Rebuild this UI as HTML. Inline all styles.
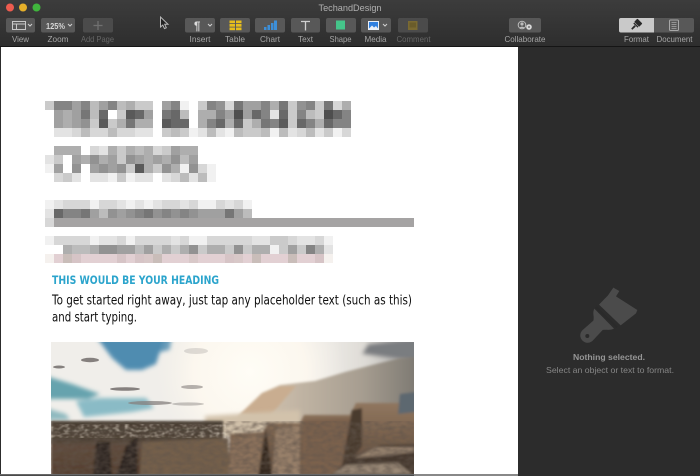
<!DOCTYPE html>
<html><head><meta charset="utf-8"><title>TechandDesign</title>
<style>
html,body{margin:0;padding:0;background:#2b2b2b}
#w{position:relative;width:700px;height:476px;overflow:hidden;background:#2c2c2c;font-family:"Liberation Sans",sans-serif}
#tb{position:absolute;left:0;top:0;width:700px;height:46px;background:linear-gradient(#3c3c3c,#2e2e2e);border-bottom:1px solid #151515}
#pg{position:absolute;left:1px;top:47px;width:517px;height:429px;background:#fff}
#bar{position:absolute;left:54px;top:218px;width:360px;height:9px;background:#a5a3a3}
table{position:absolute;border-collapse:collapse;table-layout:fixed}
td{width:9px;height:9px;padding:0;border:0;font-size:0;line-height:0}
.w{background:#fff}.a{background:#f1f1f1}.b{background:#e3e3e3}.c{background:#d7d7d7}.d{background:#cacaca}.e{background:#bcbcbc}.f{background:#aeaeae}.g{background:#a0a0a0}.h{background:#929292}.i{background:#848484}.j{background:#767676}.k{background:#686868}.l{background:#5a5a5a}.m{background:#4e4e4e}
.p{background:#e2d0d3}.q{background:#d8c8c8}.r{background:#c9bdb9}.s{background:#f5f1ee}.t{background:#d6c4c6}
svg{position:absolute;left:0;top:0}
</style></head><body><div id="w">
<div id="tb"></div><div id="pg"></div>
<table style="left:45px;top:101px">
<tr><td class=d><td class=i><td class=i><td class=g><td class=i><td class=e><td class=g><td class=i><td class=e><td class=f><td class=d><td class=d><td class=w><td class=g><td class=i><td class=a><td class=w><td class=d><td class=i><td class=h><td class=c><td class=j><td class=g><td class=g><td class=i><td class=f><td class=j><td class=d><td class=h><td class=i><td class=d><td class=j><td class=c><td class=f>
<tr><td class=w><td class=g><td class=f><td class=g><td class=j><td class=e><td class=k><td class=w><td class=d><td class=l><td class=k><td class=g><td class=w><td class=j><td class=k><td class=e><td class=w><td class=f><td class=f><td class=i><td class=g><td class=m><td class=g><td class=k><td class=i><td class=b><td class=k><td class=d><td class=i><td class=e><td class=d><td class=m><td class=k><td class=i>
<tr><td class=w><td class=g><td class=f><td class=g><td class=h><td class=d><td class=l><td class=d><td class=f><td class=j><td class=f><td class=f><td class=w><td class=l><td class=k><td class=k><td class=w><td class=f><td class=i><td class=k><td class=f><td class=k><td class=d><td class=f><td class=j><td class=i><td class=l><td class=d><td class=k><td class=i><td class=f><td class=k><td class=i><td class=i>
<tr><td class=w><td class=b><td class=b><td class=c><td class=e><td class=c><td class=c><td class=e><td class=c><td class=c><td class=b><td class=b><td class=w><td class=d><td class=e><td class=d><td class=a><td class=b><td class=e><td class=b><td class=a><td class=e><td class=d><td class=d><td class=e><td class=a><td class=e><td class=b><td class=c><td class=e><td class=b><td class=d><td class=a><td class=c>
</table>
<table style="left:45px;top:146px">
<tr><td class=w><td class=f><td class=f><td class=f><td class=w><td class=c><td class=b><td class=f><td class=d><td class=f><td class=e><td class=f><td class=c><td class=d><td class=g><td class=f><td class=f><td class=w><td class=w>
<tr><td class=b><td class=d><td class=w><td class=g><td class=f><td class=h><td class=f><td class=g><td class=d><td class=h><td class=g><td class=f><td class=g><td class=f><td class=h><td class=e><td class=g><td class=w><td class=w>
<tr><td class=a><td class=g><td class=w><td class=h><td class=w><td class=g><td class=h><td class=g><td class=h><td class=d><td class=l><td class=f><td class=d><td class=h><td class=f><td class=a><td class=h><td class=c><td class=a>
<tr><td class=w><td class=c><td class=d><td class=b><td class=w><td class=b><td class=b><td class=a><td class=d><td class=a><td class=b><td class=b><td class=w><td class=b><td class=c><td class=e><td class=b><td class=e><td class=a>
</table>
<table style="left:45px;top:200px">
<tr><td class=a><td class=b><td class=c><td class=c><td class=c><td class=a><td class=c><td class=c><td class=b><td class=a><td class=b><td class=a><td class=b><td class=c><td class=c><td class=b><td class=c><td class=a><td class=a><td class=c><td class=b><td class=c><td class=a>
<tr><td class=b><td class=k><td class=i><td class=i><td class=j><td class=g><td class=e><td class=h><td class=g><td class=h><td class=i><td class=j><td class=h><td class=i><td class=h><td class=i><td class=h><td class=g><td class=g><td class=g><td class=j><td class=g><td class=e>
<tr><td class=c>
</table>
<div id="bar"></div>
<table style="left:45px;top:236px">
<tr><td class=a><td class=c><td class=c><td class=c><td class=c><td class=a><td class=b><td class=b><td class=c><td class=a><td class=c><td class=c><td class=c><td class=c><td class=b><td class=c><td class=a><td class=a><td class=c><td class=c><td class=c><td class=c><td class=c><td class=b><td class=b><td class=d><td class=d><td class=c><td class=b><td class=b><td class=c><td class=a>
<tr><td class=w><td class=w><td class=f><td class=e><td class=e><td class=f><td class=h><td class=h><td class=g><td class=g><td class=e><td class=g><td class=d><td class=f><td class=d><td class=f><td class=h><td class=d><td class=f><td class=f><td class=d><td class=h><td class=d><td class=f><td class=f><td class=a><td class=d><td class=g><td class=d><td class=i><td class=f><td class=b>
<tr><td class=s><td class=p><td class=r><td class=t><td class=p><td class=p><td class=p><td class=p><td class=t><td class=p><td class=t><td class=q><td class=r><td class=p><td class=p><td class=p><td class=q><td class=p><td class=p><td class=p><td class=t><td class=q><td class=p><td class=r><td class=p><td class=p><td class=p><td class=r><td class=p><td class=p><td class=t><td class=s>
</table>
<svg width="700" height="476" viewBox="0 0 700 476" xmlns="http://www.w3.org/2000/svg" font-family="Liberation Sans, sans-serif">
<defs>
<clipPath id="ci"><rect x="51" y="342" width="363" height="132"/></clipPath>
<filter id="b3" x="-20%" y="-20%" width="140%" height="140%"><feGaussianBlur stdDeviation="2"/></filter>
<filter id="b1" x="-20%" y="-20%" width="140%" height="140%"><feGaussianBlur stdDeviation="1.200"/></filter>
<filter id="s" x="0" y="0" width="100%" height="100%"><feGaussianBlur stdDeviation=".3"/></filter>
<filter id="tx" x="0" y="0" width="100%" height="100%"><feTurbulence type="fractalNoise" baseFrequency=".14 .26" numOctaves="2" seed="4"/><feColorMatrix values="0 0 0 0 .12  0 0 0 0 .09  0 0 0 0 .07  1.700 0 0 0 -.5"/><feGaussianBlur stdDeviation=".6"/></filter>
<filter id="tl" x="0" y="0" width="100%" height="100%"><feTurbulence type="fractalNoise" baseFrequency=".2 .4" numOctaves="2" seed="9"/><feColorMatrix values="0 0 0 0 .85  0 0 0 0 .77  0 0 0 0 .66  2.200 0 0 0 -1"/><feGaussianBlur stdDeviation=".5"/></filter>
<radialGradient id="sun" gradientUnits="userSpaceOnUse" cx="250" cy="372" r="95"><stop offset="0" stop-color="#fffdf6"/><stop offset=".6" stop-color="#fdf8ef" stop-opacity=".9"/><stop offset="1" stop-color="#f6f2ea" stop-opacity="0"/></radialGradient>
<linearGradient id="mt" x1="0" x2="1" y1="0" y2="0"><stop offset="0" stop-color="#d8c6ae"/><stop offset=".3" stop-color="#c4b7a6"/><stop offset=".7" stop-color="#a69d90"/><stop offset="1" stop-color="#7e7a73"/></linearGradient>
<linearGradient id="gr" x1="0" x2="0" y1="0" y2="1"><stop offset="0" stop-color="#463c31"/><stop offset=".35" stop-color="#4f4337"/><stop offset=".45" stop-color="#5f4b3c"/><stop offset="1" stop-color="#553f30"/></linearGradient>
<linearGradient id="cl" x1="0" x2="0" y1="0" y2="1"><stop offset="0" stop-color="#937961"/><stop offset="1" stop-color="#5f4a3a"/></linearGradient>
<linearGradient id="tr" x1="0" x2="1" y1="0" y2="0"><stop offset="0" stop-color="#e7e3dc" stop-opacity="0"/><stop offset=".55" stop-color="#d5d2cc" stop-opacity=".7"/><stop offset="1" stop-color="#8b8b8c"/></linearGradient>
<linearGradient id="bot" x1="0" x2="0" y1="0" y2="1"><stop offset="0" stop-color="#777"/><stop offset="1" stop-color="#3c3c3c"/></linearGradient>
</defs>

<!-- photo -->
<g clip-path="url(#ci)">
<rect x="51" y="342" width="363" height="132" fill="#f0eeea"/>
<g filter="url(#b3)">
<polygon points="97,338 172,338 170,350 160,352 156,364 142,370 126,370 112,358" fill="#4f8cb0"/>
<polygon points="46,376 72,384 100,394 88,399 46,399" fill="#66a3ae"/>
<polygon points="76,401 100,398 146,398 154,408 132,412 84,417" fill="#8abbc6"/>
<polygon points="46,408 66,414 70,420 46,420" fill="#8fb9bf"/>
<rect x="300" y="338" width="120" height="50" fill="url(#tr)"/>
<polygon points="368,344 420,338 420,362 392,358 362,354" fill="#7a7d80"/>
</g>
<rect x="130" y="320" width="240" height="105" fill="url(#sun)"/>
<g filter="url(#s)" fill="#85807e">
<ellipse cx="90" cy="360" rx="9" ry="2.200"/><ellipse cx="59" cy="367" rx="6" ry="1.500"/><ellipse cx="125" cy="389" rx="15" ry="1.800"/><ellipse cx="192" cy="387" rx="11" ry="2" opacity=".6"/><ellipse cx="150" cy="403" rx="22" ry="2" opacity=".75"/><ellipse cx="188" cy="404" rx="16" ry="1.600" opacity=".45"/><ellipse cx="196" cy="351" rx="12" ry="3" opacity=".25"/>
</g>
<g filter="url(#b1)">
<polygon points="238,416 262,393 280,385 315,381 345,372 372,365 400,358 416,357 416,425 238,425" fill="url(#mt)"/>
<polygon points="240,414 262,393 280,386 296,386 270,416" fill="#c9ad90"/>
</g>
<polygon points="205,416 300,410 300,436 205,438" fill="#d2c2ab" filter="url(#b3)"/>
<g filter="url(#b1)">
<rect x="51" y="421" width="172" height="55" fill="url(#gr)"/>
<polygon points="228,476 230,434 263,432 268,423 300,423 304,415 350,415 356,403 400,403 416,398 416,476" fill="url(#cl)"/>
<polygon points="93,476 96,442 110,442 112,476" fill="#2f2620"/>
<polygon points="116,476 126,446 138,436 137,476" fill="#2f2620"/>
<polygon points="140,476 142,442 228,438 230,476" fill="#75604c"/>
<polygon points="228,476 232,438 262,434 260,476" fill="#8c725c"/>
<polygon points="258,476 266,428 272,476" fill="#33271f"/>
<polygon points="272,476 276,428 300,426 300,476" fill="#98806a"/>
<polygon points="300,476 304,420 350,418 344,476" fill="#7b624e"/>
<polygon points="340,476 352,410 362,408 362,446 340,476" fill="#4a3a2e"/>
<polygon points="350,458 380,445 416,444 416,476 330,476" fill="#45372d"/>
<polygon points="354,458 376,447 414,447 414,452 380,456" fill="#96826e"/>
<polygon points="332,474 346,465 398,463 412,474" fill="#9a8977"/>
<polygon points="400,394 416,392 416,412 398,414" fill="#5d6770"/>
</g>
<rect x="51" y="421" width="363" height="53" filter="url(#tx)" opacity=".7"/>
<rect x="51" y="424" width="175" height="14" filter="url(#tl)" opacity=".75"/>
</g>
<rect x="0" y="474" width="414" height="2" fill="url(#bot)"/>
<rect x="414" y="474" width="104" height="2" fill="#888"/>

<!-- document text -->
<text x="52" y="284" font-size="11.500" font-weight="700" fill="#2ba4cc" textLength="167" lengthAdjust="spacingAndGlyphs" font-family="DejaVu Sans, sans-serif">THIS WOULD BE YOUR HEADING</text>
<text x="52" y="304.500" font-size="13" fill="#0e0e0e" textLength="360" lengthAdjust="spacingAndGlyphs" font-family="DejaVu Sans, sans-serif">To get started right away, just tap any placeholder text (such as this)</text>
<text x="52" y="321.500" font-size="13" fill="#0e0e0e" textLength="85" lengthAdjust="spacingAndGlyphs" font-family="DejaVu Sans, sans-serif">and start typing.</text>

<g filter="url(#s)">
<!-- window chrome -->
<circle cx="10" cy="7.500" r="4" fill="#ee5b50"/><circle cx="23" cy="7.500" r="4" fill="#e6b02c"/><circle cx="36.500" cy="7.500" r="4" fill="#3fb63c"/>
<text x="350" y="11" font-size="9.500" fill="#b0b0b0" text-anchor="middle" textLength="63" lengthAdjust="spacingAndGlyphs">TechandDesign</text>

<!-- toolbar buttons -->
<g fill="#585858">
<rect x="6" y="18" width="29" height="14.500" rx="2"/><rect x="41" y="18" width="34" height="14.500" rx="2"/><rect x="83" y="18" width="30" height="14.500" rx="2" fill="#4c4c4c"/>
<rect x="185" y="18" width="30" height="14.500" rx="2"/><rect x="220" y="18" width="30" height="14.500" rx="2"/><rect x="255" y="18" width="30" height="14.500" rx="2"/><rect x="291" y="18" width="29" height="14.500" rx="2"/><rect x="326" y="18" width="30" height="14.500" rx="2"/><rect x="361" y="18" width="30" height="14.500" rx="2"/><rect x="398" y="18" width="30" height="14.500" rx="2" fill="#4c4c4c"/>
<rect x="509" y="18" width="32" height="14.500" rx="2"/>
<rect x="619" y="18" width="75" height="14.500" rx="2"/>
</g>
<path d="M621 18H654V32.500H621a2 2 0 0 1-2-2V20a2 2 0 0 1 2-2z" fill="#c9c9c9"/>

<!-- icons -->
<g fill="none" stroke="#c8c8c8" stroke-width="1"><rect x="12.500" y="21.500" width="13" height="8"/><path d="M12.500 24H25.500M16.500 24V29.500"/></g>
<g fill="none" stroke="#d0d0d0" stroke-width="1"><path d="M28 24l2 2 2-2M68 24l2 2 2-2M208 24l2 2 2-2M383 24l2 2 2-2"/></g>
<text x="46" y="29" font-size="8.500" font-weight="700" fill="#d8d8d8" textLength="19" lengthAdjust="spacingAndGlyphs">125%</text>
<path d="M98 21V30M93.500 25.500H102.500" stroke="#6f6f6f" stroke-width="1.300"/>
<text x="194" y="30" font-size="11.500" font-weight="700" fill="#dcdcdc">¶</text>
<g fill="#e6bd1f"><rect x="229.500" y="20.500" width="5.500" height="2.700"/><rect x="236" y="20.500" width="5.500" height="2.700"/><rect x="229.500" y="24" width="5.500" height="2.700"/><rect x="236" y="24" width="5.500" height="2.700"/><rect x="229.500" y="27.500" width="5.500" height="2.700"/><rect x="236" y="27.500" width="5.500" height="2.700"/></g>
<g fill="#3d8fd8"><rect x="264" y="27" width="2.500" height="3"/><rect x="267.500" y="25" width="2.500" height="5"/><rect x="271" y="23" width="2.500" height="7"/><rect x="274" y="20.500" width="3" height="9.500"/></g>
<path d="M301 21.500H310M305.500 21.500V30.500" stroke="#d0d0d0" stroke-width="1.300" fill="none"/>
<rect x="336" y="20.500" width="9" height="9" fill="#45c58a"/>
<rect x="368" y="21" width="11" height="9" fill="#e9eef6"/><rect x="369" y="22" width="9" height="6.500" fill="#2f7fe0"/><path d="M369 28.500l3-3 2 2 2-1.500 2 2.500z" fill="#e9eef6"/>
<rect x="408" y="21" width="9.500" height="9" fill="#7a6a32"/><rect x="409.500" y="22.500" width="6.500" height="5" fill="#6a5c2c"/>
<circle cx="522" cy="25" r="3.800" fill="none" stroke="#bdbdbd" stroke-width="1"/><circle cx="522" cy="24" r="1.600" fill="#bdbdbd"/><path d="M519.500 28c.8-1.800 4.200-1.800 5 0" fill="#bdbdbd"/>
<circle cx="529" cy="27" r="2.800" fill="#d8d8d8"/><circle cx="529" cy="27" r=".9" fill="#555"/>
<g transform="translate(636 25) rotate(45)" fill="#2a2a2a"><rect x="-3.500" y="-5.500" width="7" height="4.500" rx=".6"/><rect x="-3" y="-.5" width="6" height="1.300"/><path d="M-1 1.200H1L.8 6H-.8z"/></g>
<rect x="669.500" y="20" width="9" height="10.500" rx="1" fill="none" stroke="#a8a8a8"/><path d="M671.500 22.500h5M671.500 24.500h5M671.500 26.500h5M671.500 28.500h5" stroke="#a8a8a8" stroke-width=".8"/>

<!-- toolbar labels -->
<g font-size="8.500" fill="#a6a6a6" text-anchor="middle">
<text x="20.500" y="42" textLength="17" lengthAdjust="spacingAndGlyphs">View</text>
<text x="58" y="42" textLength="21" lengthAdjust="spacingAndGlyphs">Zoom</text>
<text x="97.500" y="42" fill="#666" textLength="33" lengthAdjust="spacingAndGlyphs">Add Page</text>
<text x="200" y="42" textLength="21" lengthAdjust="spacingAndGlyphs">Insert</text>
<text x="235" y="42" textLength="20" lengthAdjust="spacingAndGlyphs">Table</text>
<text x="270" y="42" textLength="20" lengthAdjust="spacingAndGlyphs">Chart</text>
<text x="305.500" y="42" textLength="15" lengthAdjust="spacingAndGlyphs">Text</text>
<text x="340.500" y="42" textLength="22" lengthAdjust="spacingAndGlyphs">Shape</text>
<text x="375.500" y="42" textLength="22" lengthAdjust="spacingAndGlyphs">Media</text>
<text x="413.500" y="42" fill="#666" textLength="34" lengthAdjust="spacingAndGlyphs">Comment</text>
<text x="525" y="42" textLength="41" lengthAdjust="spacingAndGlyphs">Collaborate</text>
<text x="636.500" y="42" textLength="25" lengthAdjust="spacingAndGlyphs">Format</text>
<text x="674.500" y="42" textLength="36" lengthAdjust="spacingAndGlyphs">Document</text>
</g>

<!-- cursor -->
<path d="M160.500 17V27l2.300-2 1.700 3.600 1.800-.8-1.600-3.500H168z" fill="#222" stroke="#b8b8b8" stroke-width="1"/>

<!-- sidebar -->
<g transform="translate(530 280) scale(.3333)" fill="#4b4b4b">
<path d="M207 74L234 46 250 23 268 33 258 49 322 90 318 100 272 136Z"/>
<path d="M193 86L252 146C240 152 228 148 218 150L190 180A22 22 0 1 1 158 150L190 122C194 110 186 100 193 86Z"/>
<path d="M198 80L262 144" stroke="#2c2c2c" stroke-width="7" fill="none"/>
<circle cx="172" cy="168" r="6" fill="#2c2c2c"/>
</g>
<text x="609" y="360" font-size="8.500" font-weight="700" fill="#969696" text-anchor="middle" textLength="72" lengthAdjust="spacingAndGlyphs">Nothing selected.</text>
<text x="610" y="373" font-size="8.500" fill="#868686" text-anchor="middle" textLength="128" lengthAdjust="spacingAndGlyphs">Select an object or text to format.</text>
</g>
</svg>
</div></body></html>
